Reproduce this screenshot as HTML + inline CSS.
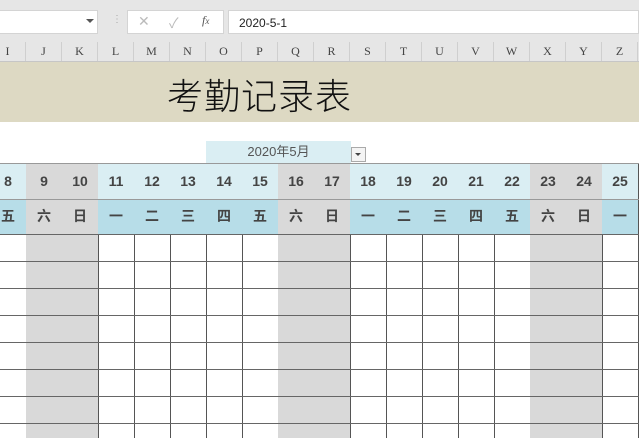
<!DOCTYPE html>
<html><head><meta charset="utf-8"><style>
*{margin:0;padding:0;box-sizing:border-box}
body{width:639px;height:438px;overflow:hidden;background:#fff;position:relative;font-family:"Liberation Sans","Noto Sans CJK SC",sans-serif}
.a{position:absolute}
</style></head><body>
<div class="a" style="left:0;top:0;width:639px;height:62px;background:#e6e6e6"></div>
<div class="a" style="left:0;top:10px;width:98px;height:24px;background:#fff;border:1px solid #d4d4d4;border-left:none"></div>
<div class="a" style="left:86px;top:19px;width:0;height:0;border-left:4px solid transparent;border-right:4px solid transparent;border-top:4px solid #555"></div>
<div class="a" style="left:112px;top:14px;color:#aaa;font-size:10px">⋮</div>
<div class="a" style="left:127px;top:10px;width:97px;height:24px;background:#fff;border:1px solid #d4d4d4"></div>
<div class="a" style="left:138px;top:13px;color:#bbb;font-size:14px">✕</div>
<div class="a" style="left:169px;top:13px;color:#bbb;font-size:14px">✓</div>
<div class="a" style="left:202px;top:13px;color:#555;font-size:12px;font-style:italic;font-family:'Liberation Serif',serif">f<span style="font-size:9px">x</span></div>
<div class="a" style="left:228px;top:10px;width:411px;height:24px;background:#fff;border:1px solid #d4d4d4;font-size:12px;color:#222;padding:5px 10px">2020-5-1</div>
<div class="a" style="left:0;top:61px;width:639px;height:1px;background:#c6c6c6"></div>
<div id="ch"></div>
<div class="a" style="left:0;top:62px;width:639px;height:60px;background:#ddd9c3"></div>
<div class="a" style="left:167px;top:68px;font-size:36px;color:#111;font-family:'Noto Sans CJK SC',sans-serif;font-weight:300;letter-spacing:1px">考勤记录表</div>
<div class="a" style="left:206px;top:141px;width:145px;height:22px;background:#daeef3;font-size:13px;color:#555;text-align:center;line-height:22px">2020年5月</div>
<div class="a" style="left:351px;top:147px;width:15px;height:15px;background:#f4f4f4;border:1px solid #aaa"></div>
<div class="a" style="left:355px;top:153px;width:0;height:0;border-left:3px solid transparent;border-right:3px solid transparent;border-top:3px solid #444"></div>
<div id="g"></div>
<script>
var L=['I','J','K','L','M','N','O','P','Q','R','S','T','U','V','W','X','Y','Z'];
var h='';
for(var i=0;i<18;i++){var x=-10+i*36;h+='<div class="a" style="left:'+x+'px;top:42px;width:36px;height:19px;text-align:center;font-family:\'Liberation Serif\',serif;font-size:12px;color:#444;line-height:19px;border-right:1px solid #cfcfcf">'+L[i]+'</div>';}
document.getElementById('ch').outerHTML=h;
var wd=['五','六','日','一','二','三','四'];
var g='';
for(var i=0;i<18;i++){var d=8+i;var x=-10+i*36;var w=wd[i%7];var gray=(w=='六'||w=='日');
g+='<div class="a" style="left:'+x+'px;top:163px;width:36px;height:36px;background:'+(gray?'#d9d9d9':'#daeef3')+';text-align:center;line-height:36px;font-size:14px;font-weight:bold;color:#444">'+d+'</div>';
g+='<div class="a" style="left:'+x+'px;top:199px;width:36px;height:35px;background:'+(gray?'#d9d9d9':'#b7dde8')+';text-align:center;line-height:35px;font-size:14px;font-weight:bold;color:#444;font-family:\'Noto Sans CJK SC\',sans-serif">'+w+'</div>';
if(gray)g+='<div class="a" style="left:'+x+'px;top:234px;width:36px;height:204px;background:#d9d9d9"></div>';
g+='<div class="a" style="left:'+(x+36)+'px;top:163px;width:1px;height:275px;background:#555"></div>';}
var ys=[163,199,234,261,288,315,342,369,396,423];
for(var j=0;j<ys.length;j++)g+='<div class="a" style="left:0;top:'+ys[j]+'px;width:639px;height:1px;background:'+(j<2?'#999':'#666')+'"></div>';
document.getElementById('g').outerHTML=g;
</script>
</body></html>
